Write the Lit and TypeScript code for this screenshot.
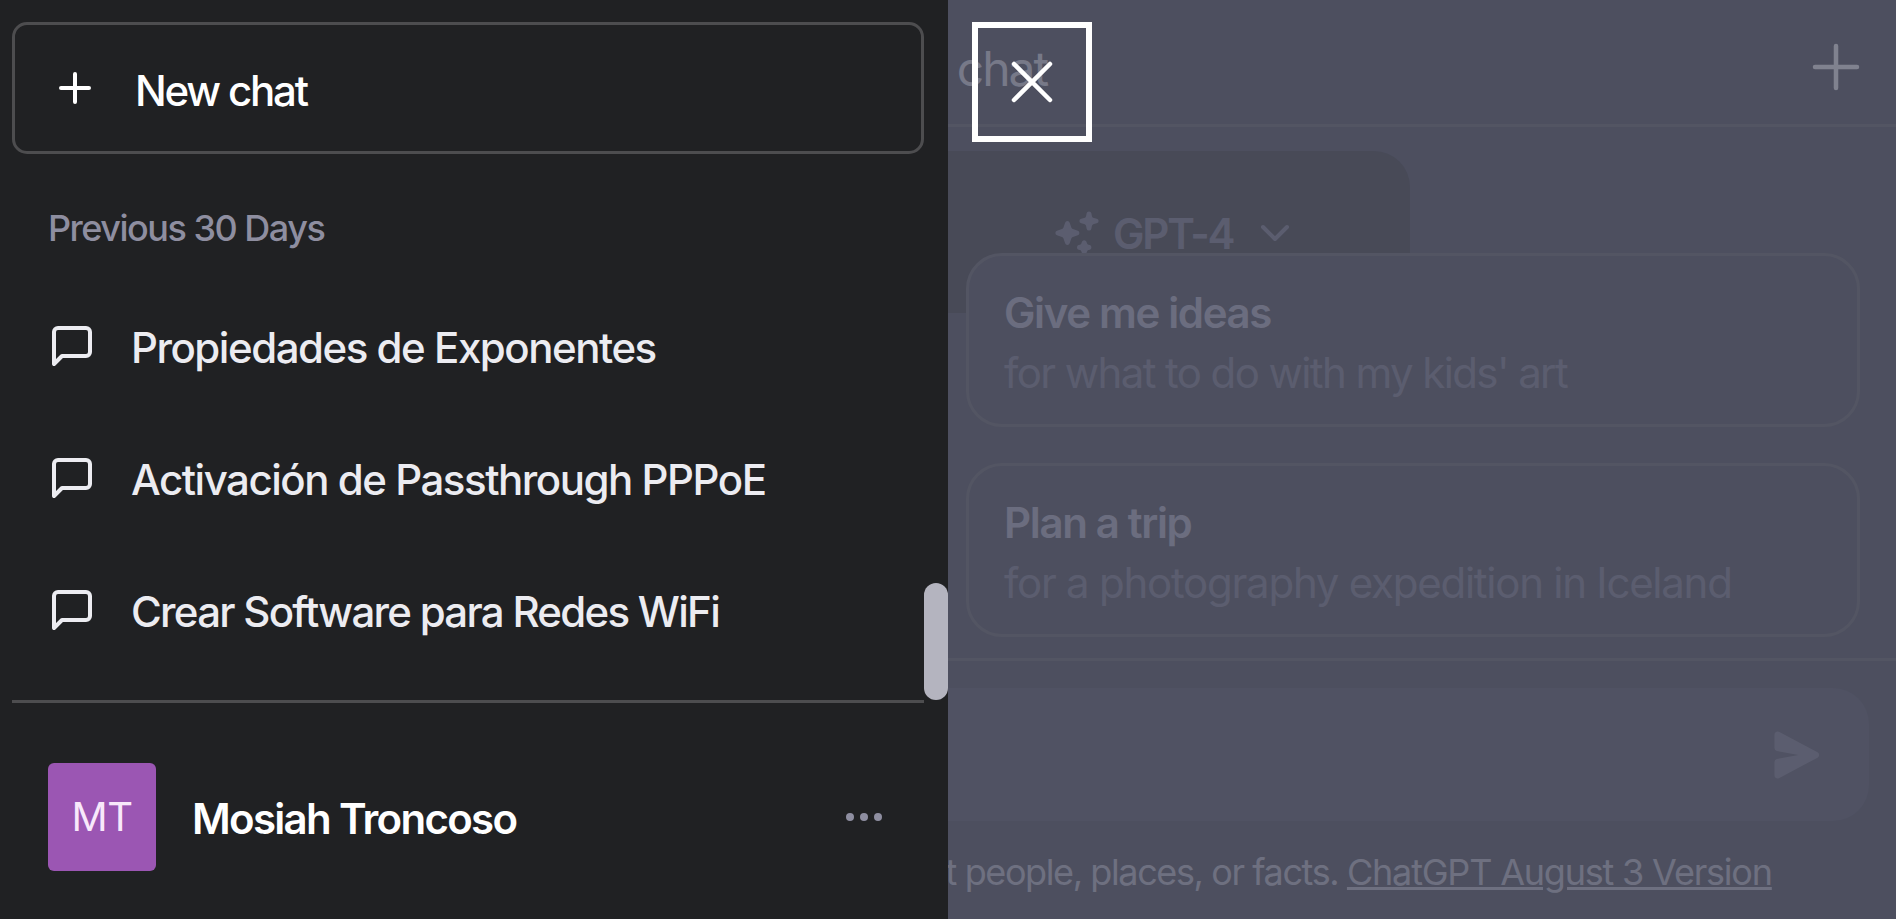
import { LitElement, html, css, svg } from "lit";
import { customElement } from "lit/decorators.js";

const plus = svg`<path d="M12 5v14M5 12h14" fill="none" stroke="currentColor" stroke-linecap="round" stroke-linejoin="round"/>`;
const bubble = svg`<path d="M21 15a2 2 0 0 1-2 2H7l-4 4V5a2 2 0 0 1 2-2h14a2 2 0 0 1 2 2z" fill="none" stroke="currentColor" stroke-width="2" stroke-linecap="round" stroke-linejoin="round"/>`;
const sparkle = svg`<path fill="currentColor" d="M12.784 1.442a.8.8 0 0 0-1.569 0l-.191.953a.8.8 0 0 1-.628.628l-.953.19a.8.8 0 0 0 0 1.57l.953.19a.8.8 0 0 1 .628.629l.19.953a.8.8 0 0 0 1.57 0l.19-.953a.8.8 0 0 1 .629-.628l.953-.19a.8.8 0 0 0 0-1.57l-.953-.19a.8.8 0 0 1-.628-.629l-.19-.953ZM5.559 4.546a.8.8 0 0 0-1.519 0l-.546 1.64a.8.8 0 0 1-.507.507l-1.64.546a.8.8 0 0 0 0 1.519l1.64.547a.8.8 0 0 1 .507.505l.546 1.641a.8.8 0 0 0 1.519 0l.546-1.64a.8.8 0 0 1 .506-.507l1.641-.546a.8.8 0 0 0 0-1.519l-1.64-.546a.8.8 0 0 1-.507-.506L5.56 4.546Zm5.6 6.4a.8.8 0 0 0-1.519 0l-.147.44a.8.8 0 0 1-.505.507l-.441.146a.8.8 0 0 0 0 1.519l.44.146a.8.8 0 0 1 .507.506l.146.441a.8.8 0 0 0 1.519 0l.147-.44a.8.8 0 0 1 .506-.507l.44-.146a.8.8 0 0 0 0-1.519l-.44-.147a.8.8 0 0 1-.507-.505l-.146-.441Z"/>`;
const send = svg`<path fill="currentColor" d="M.5 1.163A1 1 0 0 1 1.97.28l12.868 6.837a1 1 0 0 1 0 1.766L1.969 15.72A1 1 0 0 1 .5 14.836V10.33a1 1 0 0 1 .816-.983L8.5 8 1.316 6.653A1 1 0 0 1 .5 5.67V1.163Z"/>`;

const chats = ["Propiedades de Exponentes", "Activación de Passthrough PPPoE", "Crear Software para Redes WiFi"];
const hints = [
  ["Give me ideas", "for what to do with my kids' art"],
  ["Plan a trip", "for a photography expedition in Iceland"],
];

@customElement("app-root")
export class AppRoot extends LitElement {
  static styles = css`
    :host {
      display: block;
      width: 100%;
      height: 100vh;
      font-family: Inter, "Liberation Sans", sans-serif;
    }
    * { box-sizing: border-box; }
    .page {
      position: relative;
      width: 100%;
      height: 919px;
      overflow: hidden;
      display: flex;
      flex-direction: column;
      background: #343541;
      color: #d9d9e3;
    }
    .topbar {
      height: 127px;
      flex: none;
      display: grid;
      grid-template-columns: 1fr auto 1fr;
      align-items: center;
      padding: 10px 24px 0;
      border-bottom: 3px solid #4d4d4f;
    }
    .title {
      margin: 0;
      font-size: 48px;
      line-height: 72px;
      font-weight: 400;
      letter-spacing: -2px;
      padding-top: 4px;
      white-space: nowrap;
    }
    .topplus {
      justify-self: end;
      width: 72px;
      height: 72px;
      color: #fff;
      stroke-width: 1.5;
      display: block;
    }
    .content { flex: 1; min-height: 0; }
    .segment {
      width: 924px;
      height: 162px;
      margin: 24px auto 0;
      border-radius: 36px;
      background: #202123;
      display: grid;
      grid-template-columns: 1fr 1fr;
      color: #6e6e80;
    }
    .tab {
      display: flex;
      align-items: center;
      padding-left: 105px;
      height: 84px;
      margin-top: 40px;
      font-size: 42px;
      font-weight: 600;
      letter-spacing: -2.2px;
    }
    .tab svg { display: block; width: 48px; height: 48px; flex: none; }
    .tab .name { margin: 0 18px 0 12px; }
    .chev { fill: none; stroke: currentColor; stroke-width: 2; stroke-linecap: round; stroke-linejoin: round; }
    .hints {
      position: relative;
      margin-top: -60px;
      padding: 0 36px;
      display: grid;
      grid-template-columns: 1fr 1fr;
      column-gap: 36px;
      row-gap: 36px;
    }
    .hint {
      grid-column: 2;
      height: 174px;
      padding: 27px 35px 0;
      border: 3px solid #4d4d4f;
      border-radius: 36px;
      background: #343541;
      font-size: 42px;
      line-height: 60px;
      white-space: nowrap;
    }
    .hint-title { font-weight: 600; color: #acacbe; letter-spacing: -1.35px; }
    .hint-sub { color: #6e6e80; letter-spacing: -1.6px; }
    .hint:last-child .hint-sub { letter-spacing: -1.25px; }
    .composer {
      flex: none;
      height: 261px;
      border-top: 3px solid #4d4d4f;
      padding: 27px 27px 0;
    }
    .input {
      height: 133px;
      border-radius: 36px;
      background: #40414f;
      display: flex;
      align-items: center;
      justify-content: flex-end;
      padding-right: 48px;
    }
    .input svg { width: 48px; height: 48px; color: #6e6e80; display: block; }
    .notice {
      margin: 27px 0 0;
      padding-left: 14px;
      font-size: 36px;
      line-height: 48px;
      text-align: center;
      white-space: nowrap;
      letter-spacing: -1.4px;
      color: #c5c5d2;
      opacity: .9;
    }
    .notice a { color: inherit; text-decoration: underline; letter-spacing: -1.2px; }
    .scrim {
      position: absolute;
      inset: 0;
      background: rgba(86, 88, 105, .75);
    }
    .drawer {
      position: absolute;
      left: 0;
      top: 0;
      bottom: 0;
      width: 948px;
      background: #202123;
      display: flex;
      flex-direction: column;
      padding: 22px 24px 0 12px;
      color: #fff;
    }
    .newchat {
      height: 132px;
      flex: none;
      display: flex;
      align-items: center;
      gap: 36px;
      padding: 0 36px;
      border: 3px solid #4d4d4f;
      border-radius: 15px;
      font-size: 42px;
      font-weight: 450;
      letter-spacing: -2.2px;
    }
    .newchat span { padding-top: 4px; }
    .newchat svg { width: 48px; height: 48px; display: block; flex: none; stroke-width: 2; }
    .list { flex: 1; min-height: 0; }
    .group {
      margin: 50px 0 30px 36px;
      font-size: 36px;
      line-height: 48px;
      font-weight: 550;
      color: #8e8ea0;
      letter-spacing: -1.5px;
    }
    .row {
      height: 132px;
      display: flex;
      align-items: flex-start;
      gap: 35px;
      padding: 36px 36px 0;
      font-size: 42px;
      font-weight: 450;
      line-height: 60px;
      color: #ececf1;
      white-space: nowrap;
      letter-spacing: -1.47px;
    }
    .row:last-child { letter-spacing: -1.72px; }
    .row svg { width: 48px; height: 48px; display: block; flex: none; margin-top: 4px; }
    .user {
      flex: none;
      height: 219px;
      border-top: 3px solid #4d4d4f;
      padding: 60px 36px 0;
      display: flex;
      align-items: flex-start;
      gap: 36px;
      font-size: 42px;
    }
    .avatar {
      width: 108px;
      height: 108px;
      flex: none;
      border-radius: 6px;
      background: #9b56b3;
      display: flex;
      align-items: center;
      justify-content: center;
      font-size: 40px;
      letter-spacing: -0.5px;
      color: #f8e8fb;
      padding-bottom: 2px;
    }
    .uname { flex: 1; font-weight: 600; line-height: 108px; letter-spacing: -1.7px; padding-top: 2px; }
    .dots { width: 48px; height: 48px; margin: 30px 0 0; color: #8e8ea0; display: block; flex: none; }
    .thumb {
      position: absolute;
      right: 0;
      bottom: 219px;
      width: 24px;
      height: 117px;
      border-radius: 12px;
      background: #b4b4bf;
    }
    .close {
      position: absolute;
      left: 972px;
      top: 22px;
      width: 120px;
      height: 120px;
      padding: 0;
      border: 6px solid #fff;
      background: transparent;
      color: #fff;
      display: flex;
      align-items: center;
      justify-content: center;
    }
    .close svg { width: 72px; height: 72px; display: block; flex: none; }
  `;

  render() {
    return html`
      <div class="page">
        <header class="topbar">
          <span></span>
          <h1 class="title">New chat</h1>
          <svg class="topplus" viewBox="0 0 24 24">${plus}</svg>
        </header>
        <main class="content">
          <div class="segment">
            <div class="tab"></div>
            <div class="tab">
              <svg viewBox="0 0 16 16">${sparkle}</svg>
              <span class="name">GPT-4</span>
              <svg viewBox="0 0 24 24"><polyline class="chev" points="6 9 12 15 18 9"></polyline></svg>
            </div>
          </div>
          <div class="hints">
            ${hints.map(([t, s]) => html`<div class="hint"><div class="hint-title">${t}</div><div class="hint-sub">${s}</div></div>`)}
          </div>
        </main>
        <footer class="composer">
          <div class="input"><svg viewBox="0 0 16 16">${send}</svg></div>
          <p class="notice">ChatGPT may produce inaccurate information about people, places, or facts. <a>ChatGPT August 3 Version</a></p>
        </footer>
        <div class="scrim"></div>
        <aside class="drawer">
          <div class="newchat"><svg viewBox="0 0 24 24">${plus}</svg><span>New chat</span></div>
          <div class="list">
            <div class="group">Previous 30 Days</div>
            ${chats.map((c) => html`<div class="row"><svg viewBox="0 0 24 24">${bubble}</svg><span>${c}</span></div>`)}
          </div>
          <div class="user">
            <div class="avatar">MT</div>
            <div class="uname">Mosiah Troncoso</div>
            <svg class="dots" viewBox="0 0 24 24"><circle cx="5" cy="12" r="2" fill="currentColor"/><circle cx="12" cy="12" r="2" fill="currentColor"/><circle cx="19" cy="12" r="2" fill="currentColor"/></svg>
          </div>
          <div class="thumb"></div>
        </aside>
        <button class="close" aria-label="Close sidebar"><svg viewBox="0 0 24 24"><path d="M18 6 6 18M6 6l12 12" fill="none" stroke="currentColor" stroke-width="1.5" stroke-linecap="round"/></svg></button>
      </div>
    `;
  }
}
